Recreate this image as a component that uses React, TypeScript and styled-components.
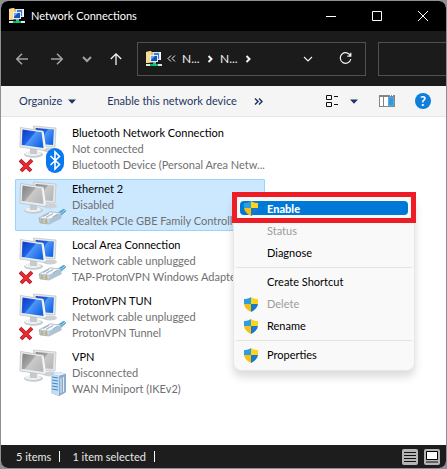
import React from 'react';
import styled, { createGlobalStyle, css } from 'styled-components';

const GlobalStyle = createGlobalStyle`
  * { box-sizing: border-box; }
  html, body { margin: 0; background: #8d8f91; }
  body, button, input { font-family: Lato, "Liberation Sans", sans-serif; font-size: 11px; line-height: 16px; }
  svg { display: block; flex: none; }
`;

const Window = styled.div`
  display: flex;
  flex-direction: column;
  min-height: 100vh;
  border: 1px solid #8d8f91;
  border-radius: 8px;
  overflow: hidden;
  background: #fff;
`;

const BareButton = styled.button`
  display: flex;
  align-items: center;
  justify-content: center;
  padding: 0;
  border: 0;
  background: none;
  color: inherit;
  white-space: nowrap;
`;

const TitleBar = styled.header`
  display: flex;
  align-items: center;
  height: 30px;
  padding-left: 8px;
  background: #000;
  color: #fff;
`;

const Title = styled.h1`
  flex: 1;
  margin: 0 0 0 6px;
  font-size: 11px;
  font-weight: 400;
`;

const CaptionButton = styled(BareButton)`
  width: 46px;
  height: 30px;
`;

const NavBar = styled.nav`
  display: flex;
  align-items: center;
  height: 55px;
  padding-left: 14px;
  background: #1b1b1b;
  color: #f2f2f2;
`;

const NavButton = styled(BareButton)<{ $gap: number; $dim?: boolean }>`
  width: 14px;
  height: 24px;
  margin-right: ${(p) => p.$gap}px;
  color: ${(p) => (p.$dim ? '#a3a0a4' : '#f4f4f4')};
`;

const AddressBox = styled.div`
  display: flex;
  flex: 1;
  align-items: center;
  min-width: 0;
  height: 34px;
  padding: 0 13px 0 8px;
  border: 1px solid #505050;
`;

const Overflow = styled(BareButton)`
  margin: 0 6px 0 5px;
`;

const Crumb = styled(BareButton)`
  justify-content: flex-start;
  width: 18px;
  margin-right: 5px;
  font-size: 12px;
`;

const NextCrumb = styled(Crumb)`
  margin-left: 5px;
`;

const Spacer = styled.span`
  flex: 1;
`;

const Refresh = styled(BareButton)`
  margin-left: 26px;
`;

const SearchBox = styled.input`
  width: 68px;
  height: 34px;
  margin-left: 12px;
  border: 1px solid #505050;
  border-right: 0;
  border-radius: 0;
  background: transparent;
  color: #fff;
`;

const Toolbar = styled.div`
  display: flex;
  align-items: center;
  height: 31px;
  padding: 0 15px 0 18px;
  border-bottom: 1px solid #e6e6e6;
  background: #f5f5f5;
  color: #1e3563;
`;

const ToolButton = styled(BareButton)<{ $after: number }>`
  gap: 6px;
  margin-right: ${(p) => p.$after}px;
`;

const ViewButton = styled(ToolButton)`
  gap: 11px;
`;

const More = styled(BareButton)`
  margin-left: 17px;
`;

const HelpButton = styled(BareButton)`
  width: 16px;
  height: 16px;
  border-radius: 50%;
  background: #0d7fdb;
  color: #fff;
  font-size: 13px;
  font-weight: 700;
`;

const Content = styled.main`
  flex: 1;
  padding: 6px 14px;
`;

const ConnectionList = styled.ul`
  display: grid;
  grid-template-columns: minmax(0, 1fr);
  gap: 4px;
  width: 250px;
  margin: 0;
  padding: 0;
  list-style: none;
`;

const ConnectionItem = styled.li`
  position: relative;
`;

const Connection = styled.button<{ $selected?: boolean }>`
  display: flex;
  align-items: center;
  gap: 5px;
  width: 100%;
  height: 52px;
  padding: 0 3px;
  border: 1px solid ${(p) => (p.$selected ? '#99d1ff' : 'transparent')};
  border-radius: 1px;
  background: ${(p) => (p.$selected ? '#cce8ff' : 'transparent')};
  text-align: left;
`;

const Lines = styled.span`
  display: flex;
  flex-direction: column;
  white-space: nowrap;
`;

const Name = styled.span`
  color: #000;
`;

const Detail = styled.span`
  color: #707070;
`;

const Menu = styled.div`
  position: absolute;
  z-index: 1;
  top: 14px;
  left: 218px;
  width: 182px;
  padding: 4px 2px;
  border: 1px solid #e7e7e7;
  border-radius: 8px;
  background: #f9f9f9;
  box-shadow: 0 6px 8px rgba(0, 0, 0, 0.14);
`;

const MenuItem = styled.button<{ $active?: boolean }>`
  display: grid;
  grid-template-columns: 14px 1fr;
  align-items: center;
  gap: 9px;
  width: 100%;
  height: 22px;
  padding: 0 8px;
  border: 0;
  background: none;
  color: #000;
  text-align: left;
  &:disabled { color: #9c9c9c; }
  ${(p) => p.$active && css`
    width: calc(100% - 8px);
    height: 14px;
    margin: 3px 4px 5px;
    padding: 0 4px;
    border-radius: 4px;
    background: #0078d7;
    color: #fff;
    font-weight: 900;
    line-height: 14px;
  `}
`;

const MenuLabel = styled.span`
  grid-column: 2;
`;

const Separator = styled.hr`
  height: 1px;
  margin: 3px 0;
  border: 0;
  background: #e2e2e2;
`;

const Callout = styled.div`
  position: absolute;
  top: -2px;
  left: -2px;
  right: -2px;
  height: 31px;
  border: 5px solid #ee1c25;
  pointer-events: none;
`;

const StatusBar = styled.footer`
  display: flex;
  align-items: center;
  height: 23px;
  padding: 0 6px 0 15px;
  background: #1d1d1d;
  color: #e8e8e8;
`;

const StatusText = styled.span`
  margin-right: 12px;
  padding-right: 8px;
  border-right: 1px solid #fff;
  line-height: 11px;
`;

const StatusButton = styled(BareButton)`
  width: 16px;
  height: 16px;
  margin-left: 6px;
  border-radius: 2px;
  background: #b5b5b5;
`;

const FolderIcon = () => (
  <svg width="16" height="16" viewBox="0 0 16 16" aria-hidden="true">
    <path d="M0 1l5-1 1 1h4v10l-8 1H0z" fill="#e6bd65" />
    <path d="M0 1l5-1v11l-5 1z" fill="#f8dc92" />
    <path d="M7 1h7v8H7z" fill="#dce9ed" />
    <path d="M8 2h5v6H8z" fill="#3d7bd9" />
    <path d="M4 4h8v7H4z" fill="#e5edf2" />
    <path d="M5 5h6v5H5z" fill="#164fc4" />
    <path d="M5 5h4l-4 4z" fill="#6ba6f2" />
    <path d="M14 1h1v8h-1z" fill="#f5fbff" />
    <path d="M7 11h3v1H7z" fill="#9fb5aa" />
    <path d="M0 13h16v2H0z" fill="#dce5e1" />
    <path d="M4 13h8v2H4z" fill="#00b869" />
    <path d="M7 12h3v3H7z" fill="#11c97b" />
  </svg>
);

const Chevron = ({ dir = 'down', bold = false }: { dir?: 'down' | 'right'; bold?: boolean }) => (
  <svg width="10" height="10" viewBox="0 0 10 10" fill="none" stroke="currentColor" strokeWidth={bold ? 2 : 1.1} aria-hidden="true">
    <path d={dir === 'down' ? 'M1 3l4 4 4-4' : 'M3.5 2l3 3-3 3'} />
  </svg>
);

const ArrowIcon = ({ turn }: { turn: number }) => (
  <svg width="14" height="14" viewBox="0 0 14 14" fill="none" stroke="currentColor" strokeWidth={turn === 90 ? 1.3 : 1.6} aria-hidden="true">
    <path d="M13 7H2M7 1.8L1.8 7 7 12.2" transform={`rotate(${turn} 7 7)`} />
  </svg>
);

const DoubleChevron = ({ left = false }: { left?: boolean }) => (
  <svg width="9" height="9" viewBox="0 0 9 9" fill="none" stroke="currentColor" strokeWidth={left ? 1 : 1.5} aria-hidden="true">
    <path d={left ? 'M4 1.5l-3 3 3 3M8 1.5l-3 3 3 3' : 'M1 1.5l3 3-3 3M5 1.5l3 3-3 3'} />
  </svg>
);

const Triangle = () => (
  <svg width="8" height="5" viewBox="0 0 8 5" aria-hidden="true"><path d="M0 .5h8L4 4.7z" fill="#1e3563" /></svg>
);

const Shield = () => (
  <svg width="14" height="15" viewBox="0 0 14 15" aria-hidden="true">
    <path d="M7 0C5 1.5 2.5 2 0 2v5h7z" fill="#2b9fe0" />
    <path d="M7 0c2 1.5 4.5 2 7 2v5H7z" fill="#ffd21c" />
    <path d="M0 7h7v8C3 13 .5 10.5 0 7z" fill="#f5bf14" />
    <path d="M14 7H7v8c4-2 6.5-4.5 7-8z" fill="#1678ce" />
  </svg>
);

type Badge = 'bluetooth' | 'cable' | 'server';

const BluetoothBadge = () => (
  <g>
    <rect x="27" y="24" width="18" height="25" rx="9" fill="#0878ee" />
    <path d="M31.500 32l9 8.500-4.500 4.500V28l4.500 4.500-9 8.500" fill="none" stroke="#fff" strokeWidth="1.6" />
  </g>
);

const CableBadge = () => (
  <g strokeLinejoin="round">
    <path d="M37 34l8-5 2 2-7 6z" fill="#3f9ed2" stroke="#4b97c0" strokeWidth=".5" />
    <path d="M40 35l6-5" stroke="#b4e4f8" />
    <path d="M20 38l11-6 11 1v5l-12 6-9-1z" fill="#c6d5df" stroke="#8ca0ae" strokeWidth=".6" />
    <path d="M20 38l11-6 11 1-11 6z" fill="#f2f8fb" stroke="#9db0be" strokeWidth=".5" />
    <path d="M31 39l11-6v5l-12 6z" fill="#adc4d4" />
    <path d="M24 36.500l6-3M27 37.500l7-4M34 37l5-3" stroke="#8197a7" strokeWidth=".8" />
    <path d="M22 39v3l2 .5v-3zM26 39.500v3l2 .5v-3z" fill="#e2c66d" stroke="#8f8067" strokeWidth=".4" />
  </g>
);

const ServerBadge = () => (
  <g>
    <path d="M32 26l8-2 7 2v18l-7 4-8-3z" fill="#7397b7" />
    <path d="M32 26l8-2 7 2-7 2z" fill="#e3effa" />
    <path d="M32 26l8 2v20l-8-3z" fill="#c5ddf3" />
    <path d="M40 28l7-2v18l-7 4z" fill="#8dacca" />
    <path d="M33 29l6 1M33 32l6 1M33 35l6 1M33 38l6 1M33 41l6 1" stroke="#4389c8" strokeWidth="1.2" />
    <path d="M42 30v15M44.500 29v15" stroke="#ddeefa" />
  </g>
);

const ConnectionIcon = ({ id, active, badge, cross }: { id: string; active: boolean; badge: Badge; cross: boolean }) => (
  <svg width="48" height="50" viewBox="0 0 48 50" aria-hidden="true">
    <defs>
      <linearGradient id={id} x1="0" y1="0" x2="1" y2=".7">
        <stop offset="0" stopColor={active ? '#0a37c0' : '#808080'} />
        <stop offset=".46" stopColor={active ? '#1f62e4' : '#a4a4a4'} />
        <stop offset=".52" stopColor={active ? '#4f97f5' : '#cacaca'} />
        <stop offset="1" stopColor={active ? '#1565e8' : '#b8b8b8'} />
      </linearGradient>
    </defs>
    <ellipse cx="31" cy="26" rx="7" ry="2.5" fill="#cdd1d4" />
    <path d="M14.500 2L37 4l-1 19-20-1z" fill="#e6e9eb" stroke="#bcc1c5" strokeWidth=".7" />
    <path d="M16.500 4l18.500 1.500-1 15.500-14-1z" fill={`url(#${id})`} />
    <ellipse cx="14.5" cy="30.500" rx="9.5" ry="3.300" fill="#c6cbcf" />
    <ellipse cx="14" cy="29.700" rx="8" ry="2.300" fill="#eef0f1" />
    <path d="M11 24l7 1v5h-7z" fill="#c5cace" />
    <path d="M1.500 3.500L24 7l3 18-1.500 1.500L1 23z" fill="#eceff0" stroke="#b4babe" strokeWidth=".7" />
    <path d="M3.500 5.500L22.500 8.300l2 15.700L2.700 21z" fill={`url(#${id})`} />
    <path d="M24 7.500l2.500 17.500" stroke="#fff" />
    {badge === 'bluetooth' && <BluetoothBadge />}
    {badge === 'cable' && <CableBadge />}
    {badge === 'server' && <ServerBadge />}
    {cross && (
      <g fill="none">
        <path d="M1 36l11 11M13 36L2 47" stroke="#b51218" strokeWidth="3.8" />
        <path d="M1.500 36.500l10 10M12.500 36.500l-10 10" stroke="#ee2930" strokeWidth="2.4" />
      </g>
    )}
  </svg>
);

interface Entry {
  name: string;
  status: string;
  device: string;
  active: boolean;
  badge: Badge;
  cross: boolean;
  selected?: boolean;
}

const connections: Entry[] = [
  { name: 'Bluetooth Network Connection', status: 'Not connected', device: 'Bluetooth Device (Personal Area Netw...', active: true, badge: 'bluetooth', cross: true },
  { name: 'Ethernet 2', status: 'Disabled', device: 'Realtek PCIe GBE Family Controller', active: false, badge: 'cable', cross: false, selected: true },
  { name: 'Local Area Connection', status: 'Network cable unplugged', device: 'TAP-ProtonVPN Windows Adapter', active: true, badge: 'cable', cross: true },
  { name: 'ProtonVPN TUN', status: 'Network cable unplugged', device: 'ProtonVPN Tunnel', active: true, badge: 'cable', cross: true },
  { name: 'VPN', status: 'Disconnected', device: 'WAN Miniport (IKEv2)', active: false, badge: 'server', cross: false },
];

const ContextMenu = () => (
  <Menu role="menu">
    <MenuItem role="menuitem" $active><Shield /><MenuLabel>Enable</MenuLabel></MenuItem>
    <MenuItem role="menuitem" disabled><MenuLabel>Status</MenuLabel></MenuItem>
    <MenuItem role="menuitem"><MenuLabel>Diagnose</MenuLabel></MenuItem>
    <Separator />
    <MenuItem role="menuitem"><MenuLabel>Create Shortcut</MenuLabel></MenuItem>
    <MenuItem role="menuitem" disabled><Shield /><MenuLabel>Delete</MenuLabel></MenuItem>
    <MenuItem role="menuitem"><Shield /><MenuLabel>Rename</MenuLabel></MenuItem>
    <Separator />
    <MenuItem role="menuitem"><Shield /><MenuLabel>Properties</MenuLabel></MenuItem>
    <Callout />
  </Menu>
);

export default function App() {
  return (
    <>
      <GlobalStyle />
      <Window>
        <TitleBar>
          <FolderIcon />
          <Title>Network Connections</Title>
          <CaptionButton aria-label="Minimize"><svg width="10" height="10"><path d="M0 5.500h10" stroke="#fff" /></svg></CaptionButton>
          <CaptionButton aria-label="Maximize"><svg width="10" height="10"><path d="M.5.5h9v9h-9z" stroke="#fff" fill="none" /></svg></CaptionButton>
          <CaptionButton aria-label="Close"><svg width="10" height="10"><path d="M0 0l10 10M10 0L0 10" stroke="#fff" /></svg></CaptionButton>
        </TitleBar>

        <NavBar>
          <NavButton $gap={21} $dim aria-label="Back"><ArrowIcon turn={0} /></NavButton>
          <NavButton $gap={16} $dim aria-label="Forward"><ArrowIcon turn={180} /></NavButton>
          <NavButton $gap={15} $dim aria-label="Recent locations"><Chevron bold /></NavButton>
          <NavButton $gap={14} aria-label="Up"><ArrowIcon turn={90} /></NavButton>
          <AddressBox>
            <FolderIcon />
            <Overflow aria-label="Parent folders"><DoubleChevron left /></Overflow>
            <Crumb>N...</Crumb>
            <Chevron dir="right" bold />
            <NextCrumb>N...</NextCrumb>
            <Chevron dir="right" bold />
            <Spacer />
            <BareButton aria-label="Address history"><Chevron /></BareButton>
            <Refresh aria-label="Refresh">
              <svg width="13" height="13" viewBox="0 0 13 13" fill="none" stroke="currentColor" strokeWidth="1.2">
                <path d="M11.500 4A5.300 5.300 0 1 0 11.800 7M11.800 .8V4.200H8.300" />
              </svg>
            </Refresh>
          </AddressBox>
          <SearchBox aria-label="Search" />
        </NavBar>

        <Toolbar>
          <ToolButton $after={31}>Organize <Triangle /></ToolButton>
          <ToolButton $after={0}>Enable this network device</ToolButton>
          <More aria-label="More commands"><DoubleChevron /></More>
          <Spacer />
          <ViewButton $after={21} aria-label="Change view">
            <svg width="13" height="12" viewBox="0 0 13 12" fill="none" stroke="#111">
              <path d="M.5.5h5v4h-5zM.5 7.500h5v4h-5zM8 1.500h4M8 9.500h4" />
            </svg>
            <Triangle />
          </ViewButton>
          <ToolButton $after={20} aria-label="Preview pane">
            <svg width="16" height="12" viewBox="0 0 16 12">
              <path d="M0 0h16v12H0z" fill="#858585" />
              <path d="M1 2h3v9H1zM5 2h4v9H5z" fill="#fff" />
              <path d="M9 2h6v9H9z" fill="#50abeb" />
              <path d="M10 3h4v7h-4z" fill="#3896dc" />
              <path d="M11 .5h1M13 .5h1" stroke="#fff" />
            </svg>
          </ToolButton>
          <HelpButton aria-label="Help">?</HelpButton>
        </Toolbar>

        <Content>
          <ConnectionList>
            {connections.map((c, i) => (
              <ConnectionItem key={c.name}>
                <Connection $selected={c.selected}>
                  <ConnectionIcon id={`screen${i}`} active={c.active} badge={c.badge} cross={c.cross} />
                  <Lines>
                    <Name>{c.name}</Name>
                    <Detail>{c.status}</Detail>
                    <Detail>{c.device}</Detail>
                  </Lines>
                </Connection>
                {c.selected && <ContextMenu />}
              </ConnectionItem>
            ))}
          </ConnectionList>
        </Content>

        <StatusBar>
          <StatusText>5 items</StatusText>
          <StatusText>1 item selected</StatusText>
          <Spacer />
          <StatusButton aria-label="Details view">
            <svg width="12" height="12"><path d="M0 1.500h12M0 4.500h12M0 7.500h12M0 10.500h12" stroke="#111" /></svg>
          </StatusButton>
          <StatusButton aria-label="Large icons view">
            <svg width="12" height="13"><path d="M.5 1.500h11v8H.5z" fill="#fff" stroke="#000" /><path d="M0 12h12" stroke="#111" /></svg>
          </StatusButton>
        </StatusBar>
      </Window>
    </>
  );
}
